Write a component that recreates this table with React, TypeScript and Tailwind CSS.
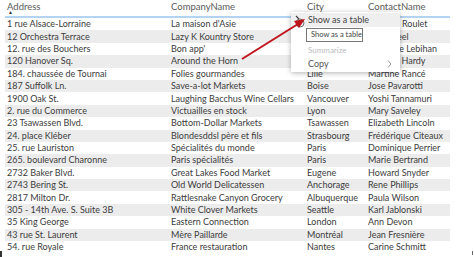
import React from "react";

// Customer rows, sorted by address
const rows: [string, string, string, string][] = [
  ["1 rue Alsace-Lorraine", "La maison d'Asie", "Toulouse", "Annette Roulet"],
  ["12 Orchestra Terrace", "Lazy K Kountry Store", "Walla Walla", "John Steel"],
  ["12. rue des Bouchers", "Bon app'", "Marseille", "Laurence Lebihan"],
  ["120 Hanover Sq.", "Around the Horn", "London", "Thomas Hardy"],
  ["184. chaussée de Tournai", "Folies gourmandes", "Lille", "Martine Rancé"],
  ["187 Suffolk Ln.", "Save-a-lot Markets", "Boise", "Jose Pavarotti"],
  ["1900 Oak St.", "Laughing Bacchus Wine Cellars", "Vancouver", "Yoshi Tannamuri"],
  ["2. rue du Commerce", "Victuailles en stock", "Lyon", "Mary Saveley"],
  ["23 Tsawassen Blvd.", "Bottom-Dollar Markets", "Tsawassen", "Elizabeth Lincoln"],
  ["24. place Kléber", "Blondesddsl père et fils", "Strasbourg", "Frédérique Citeaux"],
  ["25. rue Lauriston", "Spécialités du monde", "Paris", "Dominique Perrier"],
  ["265. boulevard Charonne", "Paris spécialités", "Paris", "Marie Bertrand"],
  ["2732 Baker Blvd.", "Great Lakes Food Market", "Eugene", "Howard Snyder"],
  ["2743 Bering St.", "Old World Delicatessen", "Anchorage", "Rene Phillips"],
  ["2817 Milton Dr.", "Rattlesnake Canyon Grocery", "Albuquerque", "Paula Wilson"],
  ["305 - 14th Ave. S. Suite 3B", "White Clover Markets", "Seattle", "Karl Jablonski"],
  ["35 King George", "Eastern Connection", "London", "Ann Devon"],
  ["43 rue St. Laurent", "Mère Paillarde", "Montréal", "Jean Fresnière"],
  ["54. rue Royale", "France restauration", "Nantes", "Carine Schmitt"],
];

const cols = "grid grid-cols-[164px_136px_61px_84px]";

export default function App() {
  return (
    <div className="relative w-[474px] h-[257px] overflow-hidden bg-white font-['Lato',sans-serif] text-[9px] leading-[12px]">
      {/* table */}
      <div className="ml-[5px] w-[445px]">
        <div className={`${cols} h-[18px] items-center border-b-2 border-[#b3d3f2] text-[#5a5a5a] text-[9.5px]`}>
          <div className="relative pl-[2px] -mt-[2px]">
            Address
            <span className="absolute left-[3px] top-[9px] text-[5px] leading-none text-[#333]">▲</span>
          </div>
          <div className="pl-[2px] -mt-[2px]">CompanyName</div>
          <div className="pl-[2px] -mt-[2px]">City</div>
          <div className="pl-[2px] -mt-[2px]">ContactName</div>
        </div>
        {rows.map((r, i) => (
          <div
            key={r[0]}
            className={`${cols} h-[12.4px] items-center text-[#3c3c3c] ${i % 2 ? "bg-[#ececec]" : "bg-white"}`}
          >
            {r.map((c, j) => (
              <div key={j} className="pl-[2px] whitespace-nowrap">
                {c}
              </div>
            ))}
          </div>
        ))}
      </div>

      {/* context menu */}
      <div className="absolute left-[291px] top-[12px] w-[109px] h-[60px] bg-white shadow-[0_1px_5px_rgba(0,0,0,0.3)] py-[1px]">
        <div className="h-[14px] flex items-center pl-[17px] bg-[#efefef] text-[#444]">Show as a table</div>
        <div className="h-[16px]" />
        <div className="h-[14px] flex items-center pl-[17px] text-[#bdbdbd] text-[8px]">Summarize</div>
        <div className="h-[14px] flex items-center justify-between pl-[17px] pr-[8px] text-[#555]">
          <span>Copy</span>
          <svg width="5" height="8" viewBox="0 0 5 8">
            <path d="M1 0.5 L4 4 L1 7.5" fill="none" stroke="#888" strokeWidth="0.9" />
          </svg>
        </div>
      </div>

      {/* tooltip */}
      <div className="absolute left-[306px] top-[28px] w-[57px] h-[14px] bg-white border border-[#777] flex items-center pl-[4px] text-[7.5px] text-[#444] whitespace-nowrap">
        Show as a table
      </div>

      {/* annotation arrow + cursor */}
      <svg className="absolute left-0 top-0" width="474" height="257">
        <circle cx="300" cy="23" r="4" fill="none" stroke="#555" strokeWidth="0.8" />
        <path d="M296 16 L299 19" stroke="#444" strokeWidth="1.2" />
        <line x1="242" y1="59" x2="298" y2="24" stroke="#c0141c" strokeWidth="2" />
        <polygon points="305,19 294,21 299,28" fill="#c0141c" />
      </svg>

      {/* stray marks at the edges */}
      <div className="absolute left-0 top-[251px] w-[2px] h-[6px] bg-[#333]" />
      <div className="absolute left-[472px] top-[251px] w-[1px] h-[4px] bg-[#666]" />
    </div>
  );
}
